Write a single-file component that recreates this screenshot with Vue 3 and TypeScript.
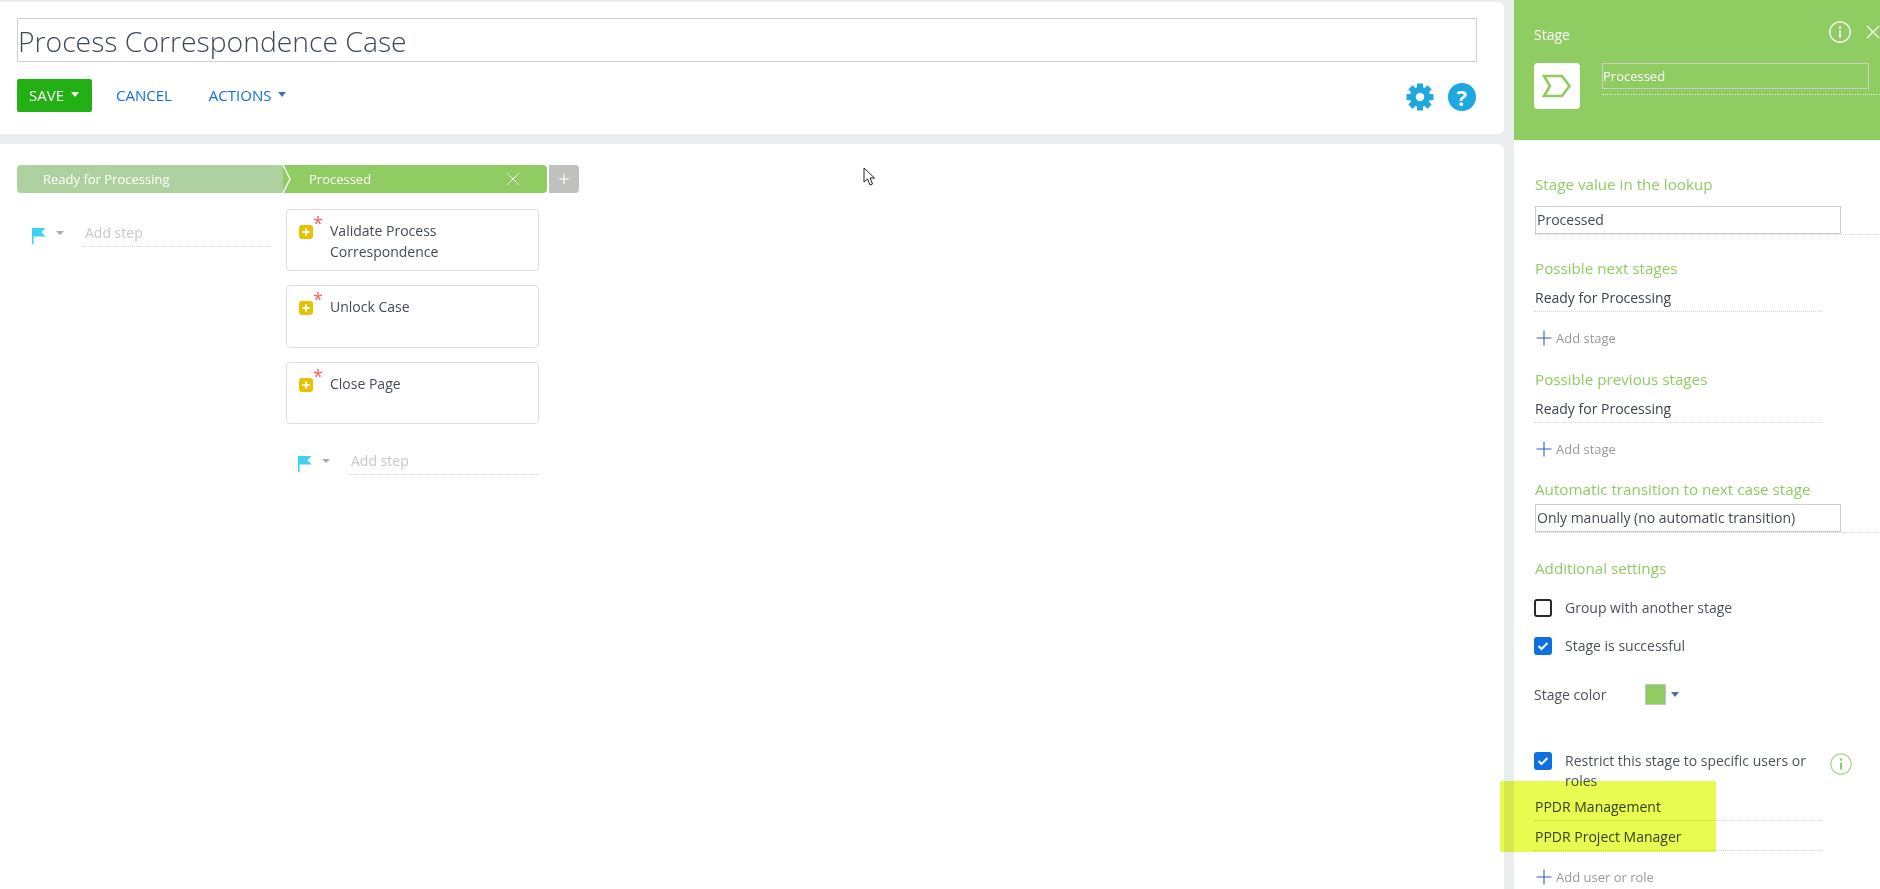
<script setup lang="ts">
const gearTeeth = [0, 45, 90, 135, 180, 225, 270, 315]

const steps = [
  { name: 'Validate Process Correspondence', height: 62 },
  { name: 'Unlock Case', height: 63 },
  { name: 'Close Page', height: 62 },
]
</script>

<template>
  <div class="page">
    <main class="main-col">
      <section class="top-card">
        <div class="title-input">Process Correspondence Case</div>
        <div class="toolbar">
          <button class="save-btn">SAVE<span class="caret caret-white"></span></button>
          <a class="link-btn cancel">CANCEL</a>
          <a class="link-btn actions">ACTIONS<span class="caret caret-blue"></span></a>
          <div class="tools">
            <svg class="gear" width="28" height="28" viewBox="0 0 28 28">
              <rect
                v-for="deg in gearTeeth"
                :key="deg"
                x="11"
                y="0.5"
                width="6"
                height="6"
                fill="#1ea7e0"
                :transform="`rotate(${deg} 14 14)`"
              />
              <circle cx="14" cy="14" r="7.2" fill="none" stroke="#1ea7e0" stroke-width="6" />
            </svg>
            <div class="help">?</div>
          </div>
        </div>
      </section>

      <section class="canvas-card">
        <div class="stage-bar">
          <div class="stage stage-ready">Ready for Processing</div>
          <div class="stage stage-active">
            Processed
            <svg class="stage-x" width="14" height="14" viewBox="0 0 14 14">
              <path d="M1 1 L13 13 M13 1 L1 13" stroke="#fff" stroke-width="1" fill="none" />
            </svg>
          </div>
          <div class="stage-add">
            <svg width="12" height="12" viewBox="0 0 12 12">
              <path d="M6 1 V11 M1 6 H11" stroke="#fff" stroke-width="1.2" fill="none" />
            </svg>
          </div>
          <svg class="stage-notch" width="10" height="28" viewBox="0 0 10 28">
            <path d="M1 0 L8 14 L1 28" stroke="#fff" stroke-width="1.5" fill="none" />
          </svg>
        </div>

        <div class="columns">
          <div class="col col-first">
            <div class="add-step">
              <svg class="flag" width="14" height="16" viewBox="0 0 14 16">
                <path d="M0 0 H13.5 L9.5 4.2 L13.5 8.5 H1.6 V16 H0 Z" fill="#3fd0f5" />
              </svg>
              <span class="mini-caret"></span>
              <span class="add-step-text">Add step</span>
            </div>
          </div>

          <div class="col col-second">
            <div
              v-for="step in steps"
              :key="step.name"
              class="step-card"
              :style="{ height: step.height + 'px' }"
            >
              <div class="step-icon">
                <svg width="14" height="14" viewBox="0 0 14 14">
                  <rect width="14" height="14" rx="3" fill="#e8c200" />
                  <path d="M7 3.5 V10.5 M3.5 7 H10.5" stroke="#fff" stroke-width="2" />
                </svg>
                <span class="star">*</span>
              </div>
              <div class="step-name">{{ step.name }}</div>
            </div>
            <div class="add-step add-step-low">
              <svg class="flag" width="14" height="16" viewBox="0 0 14 16">
                <path d="M0 0 H13.5 L9.5 4.2 L13.5 8.5 H1.6 V16 H0 Z" fill="#3fd0f5" />
              </svg>
              <span class="mini-caret"></span>
              <span class="add-step-text">Add step</span>
            </div>
          </div>
        </div>

        <svg class="cursor" width="13" height="20" viewBox="0 0 13 20">
          <path
            d="M1 1 V15 L4.5 12 L7 18 L9.5 17 L7 11 L11.5 11 Z"
            fill="#fff"
            stroke="#222"
            stroke-width="1"
          />
        </svg>
      </section>
    </main>

    <aside class="panel">
      <header class="panel-head">
        <div class="head-label">Stage</div>
        <div class="head-row">
          <div class="head-icon">
            <svg width="30" height="24" viewBox="0 0 30 24">
              <path d="M2 2 H20 L27.5 12 L20 22 H2 L8 12 Z" fill="none" stroke="#8fcc62" stroke-width="2.6" />
            </svg>
          </div>
          <div class="head-name"><div class="head-input">Processed</div></div>
        </div>
        <svg class="head-info" width="22" height="22" viewBox="0 0 22 22">
          <circle cx="11" cy="11" r="10.2" fill="none" stroke="#fff" stroke-width="1.2" />
          <path d="M11 9.5 V16.5" stroke="#fff" stroke-width="2" />
          <circle cx="11" cy="6.5" r="1.2" fill="#fff" />
        </svg>
        <svg class="head-close" width="14" height="14" viewBox="0 0 14 14">
          <path d="M1 1 L13 13 M13 1 L1 13" stroke="#fff" stroke-width="1.1" fill="none" />
        </svg>
      </header>

      <div class="panel-body">
        <h3 class="sec-title sec-lookup">Stage value in the lookup</h3>
        <div class="input-line input-lookup"><div class="box-input">Processed</div></div>

        <h3 class="sec-title sec-next">Possible next stages</h3>
        <div class="list-row">Ready for Processing</div>
        <div class="add-row">
          <svg width="16" height="16" viewBox="0 0 16 16">
            <path d="M8 0.5 V15.5 M0.5 8 H15.5" stroke="#2f62c8" stroke-width="1.1" />
          </svg>
          Add stage
        </div>

        <h3 class="sec-title sec-prev">Possible previous stages</h3>
        <div class="list-row">Ready for Processing</div>
        <div class="add-row">
          <svg width="16" height="16" viewBox="0 0 16 16">
            <path d="M8 0.5 V15.5 M0.5 8 H15.5" stroke="#2f62c8" stroke-width="1.1" />
          </svg>
          Add stage
        </div>

        <h3 class="sec-title sec-auto">Automatic transition to next case stage</h3>
        <div class="input-line input-auto"><div class="box-input">Only manually (no automatic transition)</div></div>

        <h3 class="sec-title sec-extra">Additional settings</h3>
        <label class="check-row check-first"><span class="check"></span>Group with another stage</label>
        <label class="check-row check-second">
          <span class="check checked">
            <svg width="12" height="10" viewBox="0 0 12 10">
              <path d="M1.5 5 L4.5 8 L10.5 2" fill="none" stroke="#fff" stroke-width="2" />
            </svg>
          </span>
          Stage is successful
        </label>
        <div class="color-row">
          <span>Stage color</span>
          <span class="swatch"></span>
          <span class="caret caret-navy"></span>
        </div>
        <label class="check-row check-restrict">
          <span class="check checked">
            <svg width="12" height="10" viewBox="0 0 12 10">
              <path d="M1.5 5 L4.5 8 L10.5 2" fill="none" stroke="#fff" stroke-width="2" />
            </svg>
          </span>
          <span class="restrict-text">Restrict this stage to specific users or roles</span>
          <svg class="restrict-info" width="22" height="22" viewBox="0 0 22 22">
            <circle cx="11" cy="11" r="10.2" fill="none" stroke="#a9db8a" stroke-width="1.2" />
            <path d="M11 9.5 V16.5" stroke="#8fcc62" stroke-width="2" />
            <circle cx="11" cy="6.5" r="1.2" fill="#8fcc62" />
          </svg>
        </label>
        <div class="list-row role-first">PPDR Management</div>
        <div class="list-row role-second">PPDR Project Manager</div>
        <div class="add-row">
          <svg width="16" height="16" viewBox="0 0 16 16">
            <path d="M8 0.5 V15.5 M0.5 8 H15.5" stroke="#2f62c8" stroke-width="1.1" />
          </svg>
          Add user or role
        </div>
      </div>
    </aside>

    <div class="marker"></div>
  </div>
</template>

<style>
html,
body {
  margin: 0;
  overflow: hidden;
}
</style>

<style scoped>
.page {
  position: relative;
  display: flex;
  width: 1880px;
  height: 889px;
  overflow: hidden;
  background: #e9edee;
  font-family: "Open Sans", "Liberation Sans", sans-serif;
  font-size: 14px;
  color: #444b55;
}

.main-col {
  display: flex;
  flex-direction: column;
  gap: 10px;
  width: 1504px;
  padding-top: 2px;
  flex-shrink: 0;
}

.top-card {
  height: 132px;
  box-sizing: border-box;
  padding: 16px 27px 0 17px;
  background: #fff;
  border-radius: 0 6px 6px 0;
}

.title-input {
  box-sizing: border-box;
  height: 44px;
  border: 1px solid #d0d0d0;
  font-weight: 300;
  font-size: 28.3px;
  line-height: 44px;
  color: #3f4a5a;
}

.toolbar {
  display: flex;
  align-items: center;
  margin-top: 17px;
  height: 33px;
  font-size: 15px;
}

.save-btn {
  display: flex;
  align-items: center;
  width: 75px;
  height: 33px;
  padding: 0 0 2px 12px;
  border: 0;
  border-radius: 2px;
  background: #22b014;
  color: #fff;
  font-family: inherit;
  font-size: 15px;
}

.caret {
  display: inline-block;
  width: 0;
  height: 0;
  border-left: 4.5px solid transparent;
  border-right: 4.5px solid transparent;
  border-top: 5px solid #fff;
}

.caret-white {
  margin-left: 7px;
}

.caret-blue {
  margin-left: 7px;
  border-top-color: #4a6fa8;
}

.caret-navy {
  border-top-color: #4a6fa8;
}

.link-btn {
  display: flex;
  align-items: center;
  padding-bottom: 2px;
  color: #0e6fdc;
}

.cancel {
  margin-left: 24px;
}

.actions {
  margin-left: 37px;
}

.tools {
  display: flex;
  align-items: center;
  gap: 14px;
  margin-top: 3px;
  margin-left: auto;
  margin-right: 1px;
}

.help {
  width: 28px;
  height: 28px;
  border-radius: 50%;
  background: #1ea7e0;
  color: #fff;
  font-weight: 700;
  font-size: 22px;
  line-height: 28px;
  text-align: center;
}

.canvas-card {
  position: relative;
  flex: 1;
  padding: 21px 0 0 17px;
  background: #fff;
  border-radius: 0 6px 0 0;
}

.stage-bar {
  position: relative;
  display: flex;
  height: 28px;
  font-size: 13px;
  line-height: 28px;
  color: #fff;
}

.stage {
  box-sizing: border-box;
  padding-left: 26px;
}

.stage-ready {
  width: 266px;
  background: #afd19f;
  border-radius: 4px 0 0 4px;
}

.stage-active {
  position: relative;
  width: 264px;
  background: #8fcc62;
  border-radius: 0 4px 4px 0;
}

.stage-x {
  position: absolute;
  left: 223px;
  top: 7px;
}

.stage-add {
  display: flex;
  align-items: center;
  justify-content: center;
  width: 30px;
  margin-left: 2px;
  background: #c0c1bd;
  border-radius: 0 4px 4px 0;
}

.stage-notch {
  position: absolute;
  left: 265px;
  top: 0;
}

.columns {
  display: flex;
  margin-top: 16px;
}

.col-first {
  box-sizing: border-box;
  width: 269px;
  padding: 14px 15px 0 15px;
}

.col-second {
  display: flex;
  flex-direction: column;
  gap: 14px;
  width: 253px;
}

.add-step {
  display: flex;
  align-items: center;
  height: 24px;
}

.add-step-low {
  margin-top: 13px;
  padding-left: 12px;
}

.flag {
  margin-top: 2px;
  flex-shrink: 0;
}

.mini-caret {
  width: 0;
  height: 0;
  margin-left: 10px;
  margin-bottom: 4px;
  border-left: 4px solid transparent;
  border-right: 4px solid transparent;
  border-top: 4px solid #aaa;
}

.add-step-text {
  flex: 1;
  box-sizing: border-box;
  margin-left: 19px;
  padding-left: 2px;
  height: 24px;
  border-bottom: 1px dotted #d8d8d8;
  font-size: 14px;
  line-height: 20px;
  color: #c8c8c8;
}

.step-card {
  display: flex;
  box-sizing: border-box;
  padding: 4px 10px 0 12px;
  border: 1px solid #dedede;
  border-radius: 4px;
  background: #fff;
}

.step-icon {
  position: relative;
  width: 31px;
  padding-top: 10px;
  flex-shrink: 0;
}

.star {
  position: absolute;
  left: 14px;
  top: 1px;
  font-size: 18px;
  line-height: 16px;
  color: #f06060;
}

.step-name {
  font-size: 14px;
  line-height: 21px;
  padding-top: 6px;
  color: #444b55;
}

.cursor {
  position: absolute;
  left: 863px;
  top: 23px;
}

.panel {
  width: 366px;
  margin-left: 10px;
  flex-shrink: 0;
  background: #fff;
}

.panel-head {
  position: relative;
  box-sizing: border-box;
  height: 140px;
  padding: 25px 0 0 20px;
  background: #8fcc62;
  color: #fff;
}

.head-label {
  font-size: 14px;
  line-height: 20px;
  height: 20px;
}

.head-row {
  display: flex;
  margin-top: 18px;
}

.head-icon {
  display: flex;
  align-items: center;
  justify-content: center;
  width: 46px;
  height: 46px;
  background: #fff;
  border-radius: 4px;
}

.head-name {
  flex: 1;
  margin-left: 22px;
  height: 31px;
  border-bottom: 1px dotted #e8f5dd;
}

.head-input {
  box-sizing: border-box;
  width: 267px;
  height: 26px;
  border: 1px solid #ccc;
  font-size: 13px;
  line-height: 24px;
}

.head-info {
  position: absolute;
  left: 315px;
  top: 21px;
}

.head-close {
  position: absolute;
  left: 352px;
  top: 25px;
}

.panel-body {
  padding-left: 20px;
}

.sec-title {
  margin: 0;
  padding-left: 1px;
  font-weight: 400;
  font-size: 15.2px;
  line-height: 20px;
  color: #8fcc62;
}

.sec-lookup {
  margin-top: 34px;
}

.sec-next {
  margin-top: 23px;
}

.sec-prev {
  margin-top: 21px;
}

.sec-auto {
  margin-top: 20px;
}

.sec-extra {
  margin-top: 25px;
}

.input-line {
  margin-left: 1px;
  border-bottom: 1px dotted #d8d8d8;
}

.input-lookup {
  margin-top: 12px;
}

.input-auto {
  margin-top: 5px;
}

.box-input {
  box-sizing: border-box;
  width: 306px;
  height: 28px;
  padding-left: 1px;
  border: 1px solid #ccc;
  font-size: 14px;
  line-height: 26px;
  color: #444b55;
}

.list-row {
  box-sizing: border-box;
  width: 288px;
  height: 24px;
  margin-top: 10px;
  padding-left: 1px;
  border-bottom: 1px dotted #d8d8d8;
  font-size: 14px;
  line-height: 20px;
  color: #3d434c;
}

.add-row {
  display: flex;
  align-items: center;
  gap: 4px;
  height: 20px;
  margin-top: 16px;
  padding-left: 2px;
  font-size: 13px;
  color: #999;
}

.check-row {
  display: flex;
  color: #4d535c;
  font-size: 14px;
  line-height: 20px;
}

.check-first {
  margin-top: 20px;
}

.check-second {
  margin-top: 18px;
}

.check {
  display: flex;
  align-items: center;
  justify-content: center;
  box-sizing: border-box;
  width: 18px;
  height: 18px;
  margin-top: 1px;
  margin-right: 13px;
  border: 2px solid #2a2a2a;
  border-radius: 3px;
  flex-shrink: 0;
}

.checked {
  border: 0;
  background: #0d6fe0;
}

.color-row {
  display: flex;
  align-items: center;
  height: 21px;
  margin-top: 28px;
  font-size: 14px;
  color: #4d535c;
}

.swatch {
  box-sizing: border-box;
  width: 21px;
  height: 21px;
  margin-left: 39px;
  margin-right: 5px;
  border: 1px solid #c4c4c4;
  background: #8fcc62;
}

.check-restrict {
  position: relative;
  margin-top: 46px;
}

.restrict-text {
  width: 262px;
}

.restrict-info {
  position: absolute;
  left: 296px;
  top: 2px;
}

.role-first {
  margin-top: 6px;
}

.role-second {
  margin-top: 6px;
}

.marker {
  position: absolute;
  left: 1500px;
  top: 781px;
  width: 216px;
  height: 71px;
  background: #e8fb50;
  mix-blend-mode: multiply;
}
</style>
